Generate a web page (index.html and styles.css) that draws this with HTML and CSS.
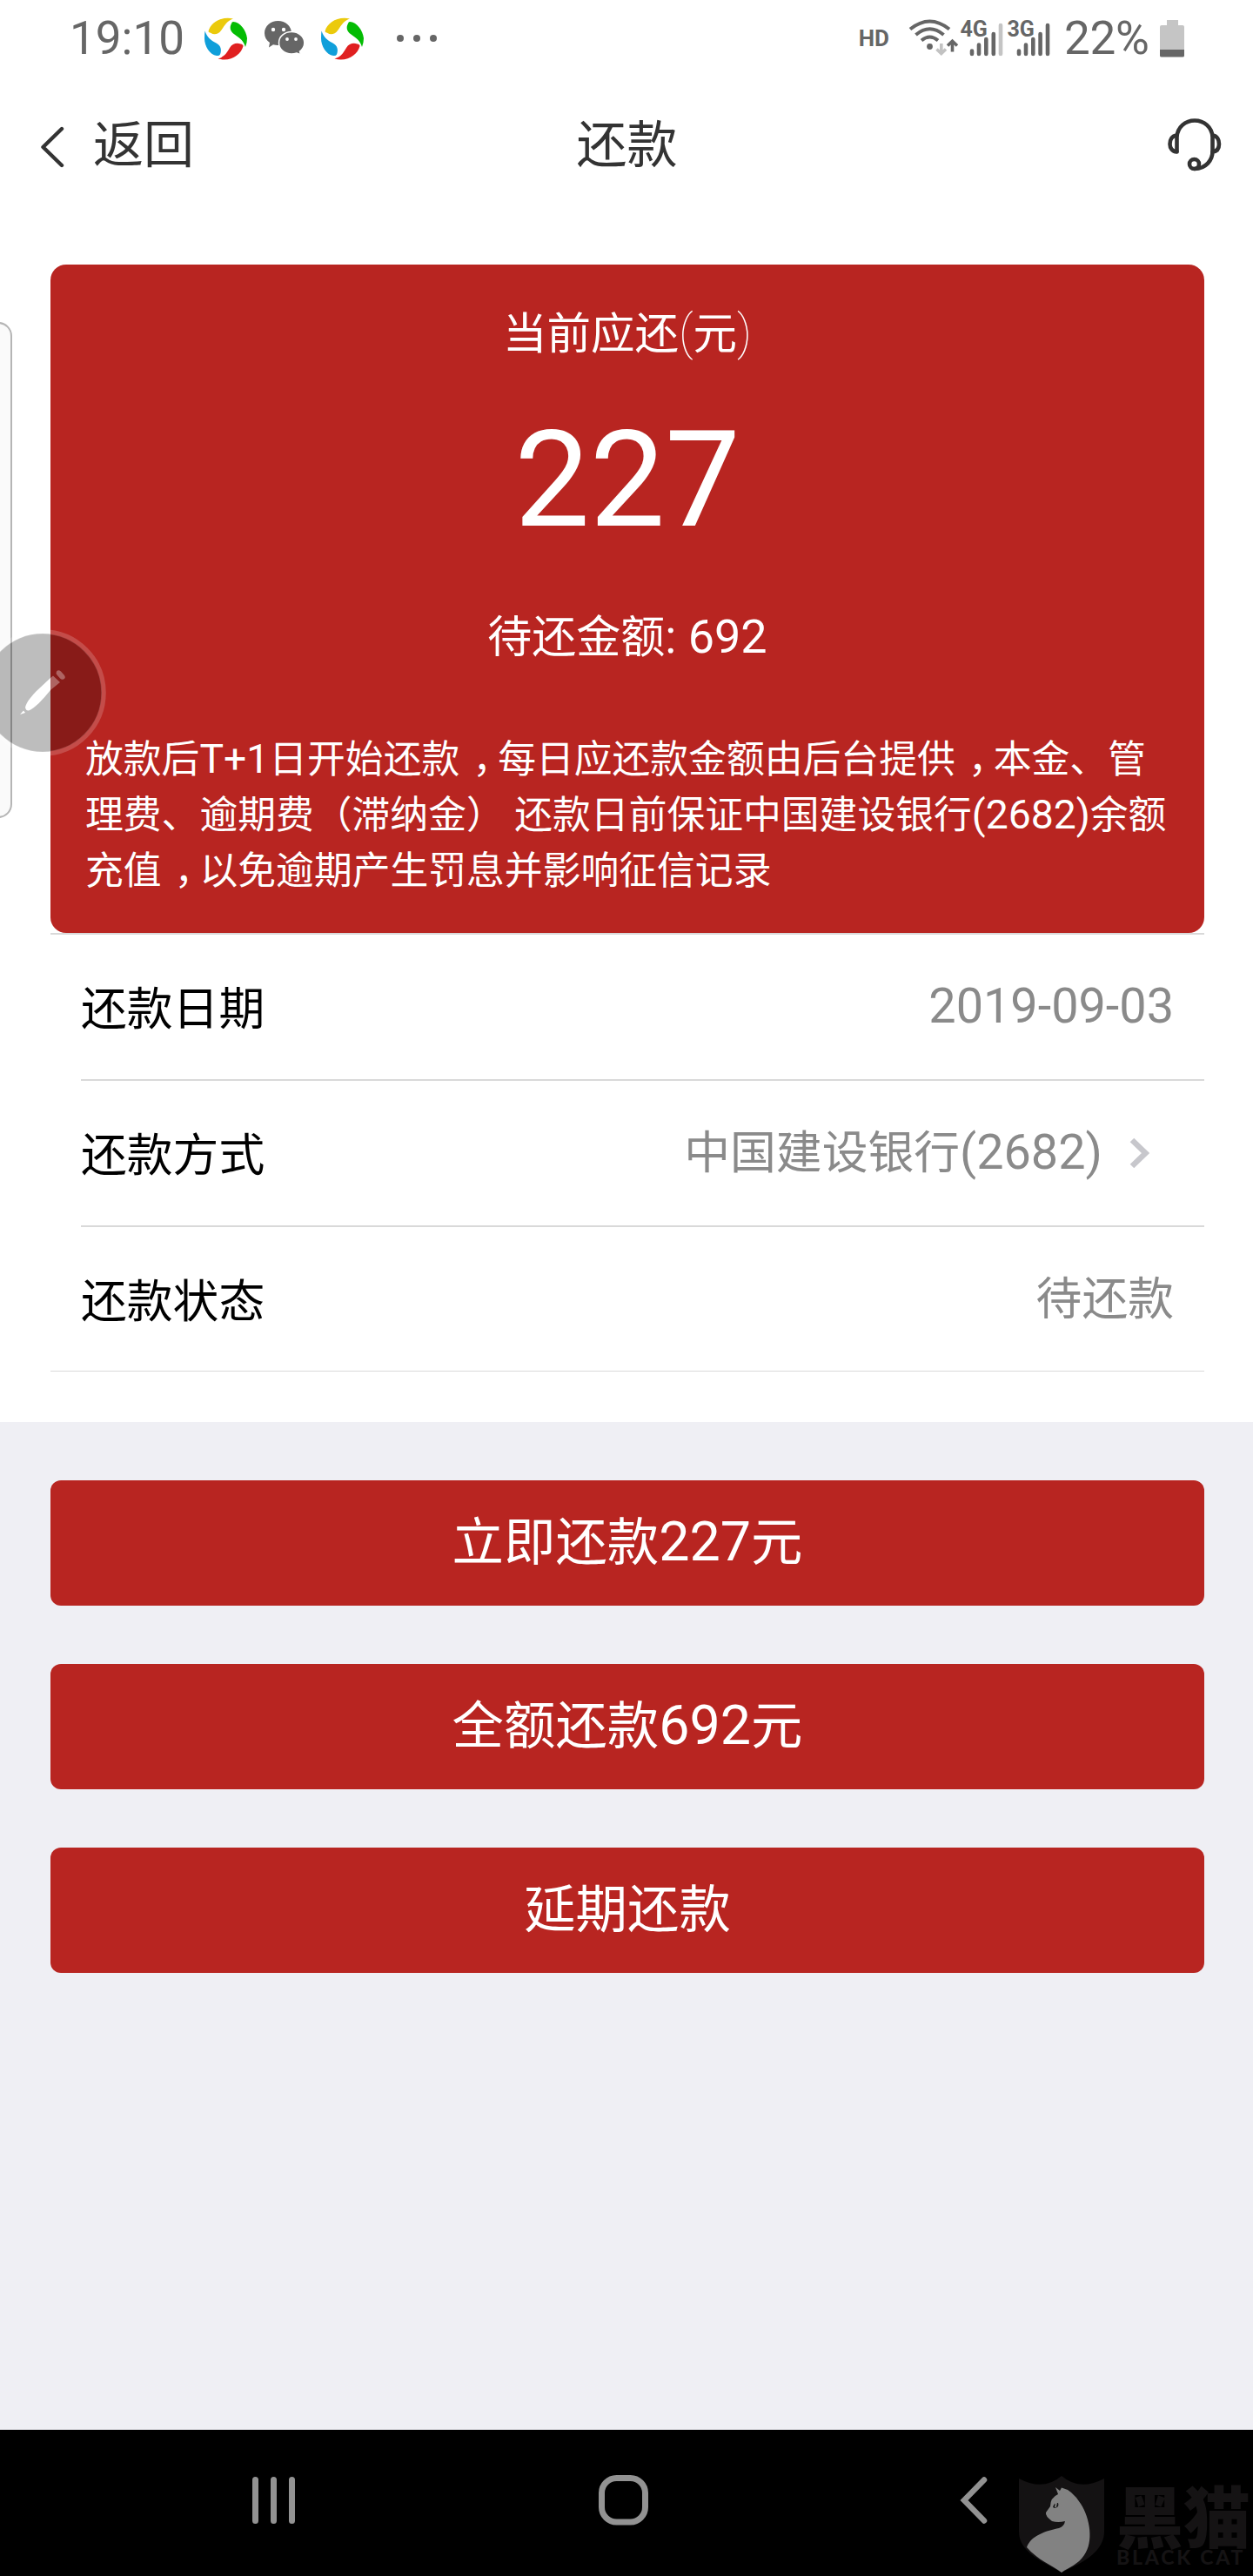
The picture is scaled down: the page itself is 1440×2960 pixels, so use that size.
FILE: index.html
```html
<!DOCTYPE html>
<html lang="zh-CN">
<head>
<meta charset="UTF-8">
<meta name="viewport" content="width=device-width, initial-scale=1.0">
<title>还款</title>
<link rel="stylesheet" href="styles.css">
</head>
<body>
  <svg width="0" height="0" class="sprite">
    <symbol id="swirl" viewBox="0 0 49 49">
      <path fill="#ebca0c" d="M4.500 16C7 6 19-1.500 33 1.500C26 4 24 8 19.500 14.500C16 19.500 11 20.500 7.500 18C6 17.500 4.800 17 4.500 16Z"/>
      <path fill="#04bc04" d="M33 5C41 5 48 15 49 24Q49 29 47 34C45 27 41 24 34.500 19.500C29.500 16 28.500 11.500 31 7Q31.500 5 33 5Z"/>
      <path fill="#e02020" d="M44.500 33C42 43 30 51.500 15.500 47.500C23 45 25 41.500 29 35C32 30 37 29 41.500 30.500Q44.500 31 44.500 33Z"/>
      <path fill="#109fda" d="M.5 15.500C3 23 7 26 13.500 29.500C19 32.500 20 37.500 18 42.500Q17 44.500 14 44C6 43 0 33 0 24Q0 19 .5 15.500Z"/>
    </symbol>
  </svg>

  <div class="status-bar">
    <span class="time">19:10</span>
    <svg class="swirl" width="49" height="49"><use href="#swirl"/></svg>
    <svg class="wechat" width="46" height="40" viewBox="0 0 46 40">
      <path fill="#666" d="M15.500 0C24 0 31 6 31 14S24 28 15.500 28Q12.500 28 10 27.200L5 30.500L6 25C2 22.500 0 18.500 0 14C0 6 7 0 15.500 0Z"/>
      <path fill="#666" stroke="#fff" stroke-width="1.500" d="M31 12.500C39 12.500 45.800 18 45.800 25.200C45.800 29 44 32.500 40.500 35L41.500 38.800L37 37Q34 38 31 38C23 38 16.500 32.500 16.500 25.200S23 12.500 31 12.500Z"/>
      <circle cx="10" cy="10" r="2.200" fill="#fff"/><circle cx="22" cy="10" r="2.200" fill="#fff"/>
      <circle cx="26" cy="21" r="1.900" fill="#fff"/><circle cx="36" cy="21" r="1.900" fill="#fff"/>
    </svg>
    <svg class="swirl" width="49" height="49"><use href="#swirl"/></svg>
    <svg class="dots" width="46" height="10" viewBox="0 0 46 10" fill="#666">
      <circle cx="4" cy="5" r="4"/><circle cx="23" cy="5" r="4"/><circle cx="42" cy="5" r="4"/>
    </svg>
    <span class="hd">HD</span>
    <svg class="signals" width="170" height="50" viewBox="1040 18 170 50">
      <g fill="none" stroke="#666" stroke-width="4">
        <path d="M1046 32.500Q1068.500 14.500 1091 32.500"/>
        <path d="M1052.500 39Q1068.500 25.500 1084.500 39"/>
        <path d="M1059 45.500Q1068.500 37.500 1078 45.500"/>
      </g>
      <circle cx="1068.500" cy="52.500" r="3.400" fill="#666"/>
      <path d="M1081.800 49V60M1076.500 55.500L1081.800 60.500L1087 55.500" fill="none" stroke="#c2c2c2" stroke-width="3.600"/>
      <path d="M1094.500 58.500V46.500M1089 51.500L1094.500 46.300L1100 51.500" fill="none" stroke="#666" stroke-width="3.600"/>
      <g stroke="#666" stroke-width="4.600" stroke-linecap="round">
        <path d="M1117 57.500V61M1125 50.500V61M1133.300 44V61M1141.800 38V61"/>
        <path d="M1150 28V61" stroke="#c4c4c4"/>
        <path d="M1171 57.500V61M1179 50.500V61M1187.300 44V61M1195.600 38V61M1204 28V61"/>
      </g>
      <g class="net"><text x="1103.500" y="41.300">4G</text><text x="1157.500" y="41.300">3G</text></g>
    </svg>
    <span class="percent">22%</span>
    <svg class="battery" width="28" height="43" viewBox="0 0 28 43">
      <path fill="#c5c5c5" d="M8 0H21V6H26Q28 6 28 8V34H0V8Q0 6 2 6H8Z"/>
      <path fill="#666" d="M0 34H28V41Q28 42.500 26 42.500H2Q0 42.500 0 41Z"/>
    </svg>
  </div>

  <header class="header">
    <a class="back">
      <svg width="28" height="48" viewBox="0 0 28 48"><path d="M25 3L3.500 24L25 45" fill="none" stroke="#333" stroke-width="4.400" stroke-linecap="round" stroke-linejoin="round"/></svg>
      <span>返回</span>
    </a>
    <h1>还款</h1>
    <svg class="service" width="62" height="62" viewBox="0 0 62 62" fill="none" stroke="#333" stroke-width="4.600" stroke-linecap="round" stroke-linejoin="round">
      <path d="M10.500 38V21C11.500 10 20 2.500 31 2.500S50.500 10 51.500 21V38C51.500 48 44 57.500 31 58"/>
      <path d="M10.500 19.500C4.500 20 2.500 25 2.500 29.500S5 38 10.500 38.500"/>
      <path d="M51.500 19.500C57 20 59 25 59 29.500S57 38 51.500 38.500"/>
      <circle cx="30.500" cy="52.500" r="5.500"/>
    </svg>
  </header>

  <main class="content">
    <section class="card">
      <div class="card-title">当前应还<span class="thin">(</span>元<span class="thin">)</span></div>
      <div class="amount">227</div>
      <div class="remain">待还金额<span class="num">: 692</span></div>
      <p class="tips">放款后<span class="num">T+1</span>日开始还款<span class="comma">，</span>每日应还款金额由后台提供<span class="comma">，</span>本金、管<br>理费、逾期费（滞纳金）<span class="num"> </span>还款日前保证中国建设银行<span class="num">(2682)</span>余额<br>充值<span class="comma">，</span>以免逾期产生罚息并影响征信记录</p>
    </section>
    <ul class="info">
      <li>
        <span class="label">还款日期</span>
        <span class="value"><span class="num">2019-09-03</span></span>
      </li>
      <li class="link">
        <span class="label">还款方式</span>
        <span class="value">中国建设银行<span class="num">(2682)</span></span>
        <svg width="24" height="38" viewBox="0 0 24 38"><path d="M3 4L18.500 19L3 34" fill="none" stroke="#c7c7cc" stroke-width="6.500"/></svg>
      </li>
      <li>
        <span class="label">还款状态</span>
        <span class="value">待还款</span>
      </li>
    </ul>
  </main>

  <div class="actions">
    <button class="btn">立即还款<span class="num">227</span>元</button>
    <button class="btn">全额还款<span class="num">692</span>元</button>
    <button class="btn">延期还款</button>
  </div>

  <div class="nav-bar">
    <svg class="recent" width="50" height="54" viewBox="0 0 50 54"><path d="M3.500 3.500V50.500M24.500 3.500V50.500M45.500 3.500V50.500" stroke="#929292" stroke-width="7" stroke-linecap="round"/></svg>
    <svg class="home" width="57" height="58" viewBox="0 0 57 58"><rect x="3.500" y="3.500" width="50" height="50.500" rx="17" fill="none" stroke="#929292" stroke-width="7"/></svg>
    <svg class="nav-back" width="32" height="54" viewBox="0 0 32 54"><path d="M28 3.500L5 27L28 50.500" fill="none" stroke="#929292" stroke-width="6.500" stroke-linecap="round"/></svg>
  </div>

  <!-- edge panel handle and floating pen -->
  <div class="edge-handle"></div>
  <svg class="pen" width="124" height="148" viewBox="0 0 124 148">
    <circle cx="49" cy="74" r="68" fill="#000" fill-opacity=".26"/>
    <circle cx="49" cy="74" r="70" fill="none" stroke="#fff" stroke-opacity=".18" stroke-width="5.500"/>
    <path fill="#fff" d="M29 91C30 85 37 77 43 71L58 57V71C49 82 40 92 33 94.500Q30 95 29 91ZM23 99L27 94.500L29 97Z"/>
    <path fill="#fff" fill-opacity=".32" d="M58 57L61 54.500L69 62L58 71ZM65 49.500Q67 47 70 49.500L74 54Q76 57 73 58.500Q71 59.500 69 57.500L65.500 53.500Q64 51.500 65 49.500Z"/>
  </svg>
  <div class="watermark">
    <svg width="98" height="114" viewBox="0 0 98 114">
      <path fill="#141213" d="M0 4Q28 19 49 1Q70 19 98 4V65C98 82 84 94 69 102L49 112L29 101C14 92 0 82 0 65Z"/>
      <path fill="#828282" d="M42 14L47 18L49 14.500Q61 17 71 33C82 50 86 77 75 92C68 103 57 106 49 112C37 103 22 98 9 83C14 69 32 64 46 61Q52 59 53 53Q45 55 38 53Q30 47 31 43L36 36Q36 26 45 22Z"/>
      <path fill="#1a1a1a" d="M39 37Q40 32 45 32Q47 37 41 38Z"/><path d="M43 32L42 37" stroke="#999" stroke-width="1.500"/>
    </svg>
    <div class="brand"><b>黑猫</b><small>BLACK CAT</small></div>
  </div>
</body>
</html>
```
FILE: styles.css
```css
* {
  box-sizing: border-box;
}
body {
  margin: 0;
  width: 1440px;
  height: 2960px;
  display: flex;
  flex-direction: column;
  position: relative;
  overflow: hidden;
  background-color: #efeff4;
  font-family: Roboto, "Noto Sans CJK SC", sans-serif;
}
svg {
  display: block;
  flex-shrink: 0;
}
.sprite {
  position: absolute;
}
/* latin text and digits run a little larger than the chinese */
.num {
  font-size: 1.057em;
  line-height: 0;
}

.status-bar {
  height: 88px;
  display: flex;
  align-items: center;
  padding: 0 79px 0 80px;
  background-color: #fff;
  color: #666;
  font-size: 53px;
  line-height: 88px;
}
.time {
  width: 155px;
}
.wechat {
  margin: 0 19px 0 20px;
}
.dots {
  margin-left: 38px;
}
.hd {
  margin-left: auto;
  font-size: 26px;
  font-weight: 700;
  line-height: 84px;
}
.signals {
  margin-left: 18px;
  margin-right: 13px;
}
.net {
  fill: #666;
  font-size: 25px;
  font-weight: 700;
}
.percent {
  width: 97px;
  letter-spacing: -0.3px;
}
.battery {
  margin-left: 13px;
}

.header {
  height: 158px;
  display: flex;
  align-items: center;
  justify-content: space-between;
  padding: 0 36px 0 46px;
  background-color: #fff;
  color: #333;
  font-size: 58px;
  line-height: 80px;
}
.header h1 {
  margin: 0;
  font-size: 58px;
  font-weight: 400;
}
.back {
  width: 271px;
  display: flex;
  align-items: center;
}
.back span {
  margin-left: 33px;
}
.back svg {
  margin-top: 4px;
}
.service {
  margin-left: 218px;
}

.content {
  height: 1388px;
  padding: 58px 56px 0 58px;
  background-color: #fff;
}
.card {
  height: 768px;
  padding: 40px 40px 0;
  border-radius: 18px;
  background-color: #b82521;
  color: #fff;
  text-align: center;
}
.card-title {
  font-size: 50.5px;
  line-height: 80px;
}
.thin {
  font-weight: 100;
  font-size: 56px;
  line-height: 0;
}
.amount {
  margin-top: 48px;
  font-size: 154px;
  line-height: 160px;
}
.remain {
  margin-top: 61px;
  font-size: 51px;
  line-height: 80px;
}
.tips {
  margin: 68px 0 0;
  font-size: 43.8px;
  line-height: 64px;
  text-align: left;
  white-space: nowrap;
}
/* half-width comma, centred in a full cell */
.comma {
  padding: 0 7px 0 15px;
  font-feature-settings: "halt";
}

.info {
  margin: 0;
  padding: 2px 0 0 35px;
  list-style-type: none;
  background: linear-gradient(#d9d9d9, #d9d9d9) 0 0 / 100% 2px no-repeat,
    linear-gradient(#d9d9d9, #d9d9d9) 0 100% / 100% 1px no-repeat;
}
.info li {
  height: 168px;
  display: flex;
  align-items: center;
  justify-content: space-between;
  padding-right: 35px;
  border-bottom: 2px solid #d9d9d9;
  font-size: 52.8px;
  line-height: 80px;
}
.info li:last-child {
  height: 166px;
  border-bottom: none;
}
.info .link {
  padding-right: 62px;
}
.label {
  padding-top: 5px;
  color: #000;
}
.value {
  margin-left: auto;
  color: #8a8a8a;
}
.link svg {
  margin-left: 31px;
}

.actions {
  flex: 1;
  display: flex;
  flex-direction: column;
  gap: 67px;
  padding: 67px 56px 0 58px;
}
.btn {
  height: 144px;
  padding: 0;
  border: none;
  border-radius: 12px;
  background-color: #b82521;
  color: #fff;
  font-family: inherit;
  font-size: 59.4px;
  line-height: 144px;
  cursor: pointer;
}

.nav-bar {
  height: 168px;
  display: flex;
  align-items: center;
  padding: 0 0 7px 290px;
  background-color: #000;
}
.home {
  margin-left: 348px;
}
.nav-back {
  margin-left: 358px;
}

.edge-handle {
  position: absolute;
  left: -20px;
  top: 370px;
  width: 34px;
  height: 570px;
  border: 2px solid #b5b5b5;
  border-radius: 16px;
  background-color: #fafafa;
}
.pen {
  position: absolute;
  left: 0;
  top: 722px;
}
.watermark {
  position: absolute;
  left: 1171px;
  top: 2844px;
  display: flex;
  color: #151314;
}
.brand {
  margin-left: 14px;
  padding-top: 8px;
}
.brand b {
  display: block;
  font-family: "Noto Sans CJK SC", sans-serif;
  font-size: 77px;
  font-weight: 900;
  line-height: 74px;
}
.brand small {
  display: block;
  font-family: Lato, sans-serif;
  font-size: 23px;
  font-weight: 900;
  letter-spacing: 2.8px;
  line-height: 24px;
  white-space: nowrap;
}
```
